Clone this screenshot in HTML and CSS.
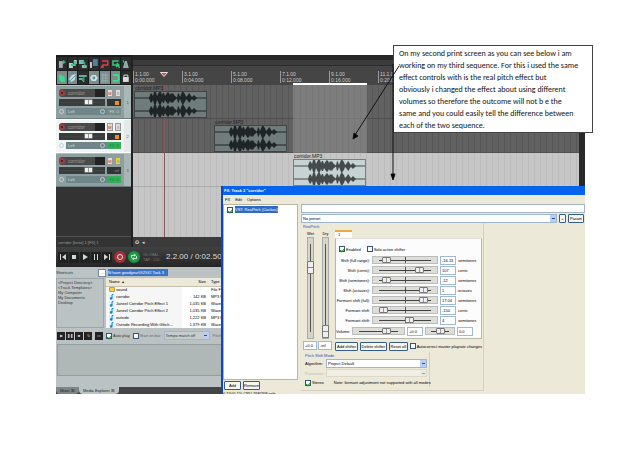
FILE: index.html
```html
<!DOCTYPE html>
<html lang="en">
<head>
<meta charset="utf-8">
<title>Second print screen</title>
<link rel="stylesheet" href="styles.css">
</head>
<body>
<svg class="defs" aria-hidden="true">
  <defs>
    <path id="half" d="M0 0V-.5H15L16-3 17-5 18-4 19-2 20-6 21-7 22-6 23-2 25-6 26-7 27-6 28-3 29-5 30-5 31-2 33-5 34-6 35-5 36-3 37-5 38-4 39-5 40-3 41-2 43-.5 44-5 45-4 46-1 48-6 49-7 50-5 51-4 52-1 54-3 55-5 56-4 57-2 58-1 60-3 61-2 62-1 63-.5H73V0Z"/>
    <symbol id="wave" viewBox="0 0 73 27">
      <use href="#half" y="7"/><use href="#half" transform="translate(0 7) scale(1 -1)"/>
      <use href="#half" y="20"/><use href="#half" transform="translate(0 20) scale(1 -1)"/>
    </symbol>
    <symbol id="note" viewBox="0 0 6 6"><path d="M0 0H6V6H0Z" fill="#e3f1fa"/><path d="M4.6 0 3 .8V4" stroke="#1686c8" fill="none"/><circle cx="2.2" cy="4.4" r="1.3" fill="#1686c8"/></symbol>
  </defs>
</svg>
<main class="page">
  <section class="daw">
    <div class="upper">
      <aside class="panel">
        <div class="tools">
          <button aria-label="New"><svg viewBox="0 0 10 12"><path d="M2 3H6V10H2Z" fill="#aab"/><path d="M5 4H9M7 2V6" stroke="#4c9" /></svg></button>
          <button aria-label="Open"><svg viewBox="0 0 10 12"><path d="M1 5H5V10H1ZM6 2H9V6H6Z" fill="#bcc"/><path d="M3 7H7V3" stroke="#3c8" stroke-width="2" fill="none"/></svg></button>
          <button aria-label="Save"><svg viewBox="0 0 10 12"><path d="M1 2H6V6H1ZM4 7H9V10H4Z" fill="#8bb"/><path d="M3 4H7V9" stroke="#3b8" fill="none"/></svg></button>
          <button aria-label="Settings"><svg viewBox="0 0 10 12"><path d="M4 1H9V8H4Z" fill="#56809a"/><path d="M1 4H3V10H1Z" fill="#ccc"/></svg></button>
          <button aria-label="Undo"><svg viewBox="0 0 10 12"><path d="M2 3H8V7H3L1 10M3 7V10" stroke="#e23a4a" stroke-width="1.5" fill="none"/></svg></button>
          <button aria-label="Redo"><svg viewBox="0 0 10 12"><path d="M8 3H2V7H7L9 10M6 5 8 7 5 9" stroke="#36c777" stroke-width="1.5" fill="none"/></svg></button>
          <button aria-label="Metronome"><svg viewBox="0 0 10 12"><path d="M4 3H6L8 10H2Z" fill="#9aa"/><path d="M5 8 2 2" stroke="#3c8"/></svg></button>
          <button class="on" aria-label="Crossfade"><svg viewBox="0 0 10 12"><path d="M2 2 8 5V10H4L2 7Z" fill="#35e08a"/></svg></button>
          <button class="on" aria-label="Group"><svg viewBox="0 0 10 12"><path d="M1 7 4 3 8 2 7 8 3 10Z" fill="#c0dde3"/><path d="M2 9 8 3" stroke="#589aa8"/></svg></button>
          <button aria-label="Ripple"><svg viewBox="0 0 10 12"><path d="M1 4H9M1 7H5" stroke="#6a9" stroke-width="2"/><path d="M6 5V10L4 8" stroke="#4c8" fill="none"/></svg></button>
          <button class="on" aria-label="Envelope"><svg viewBox="0 0 10 12"><path d="M1 6 3 3H7L9 6 7 9H3Z" fill="#cfe2e5"/><circle cx="5" cy="6" r="1.5" fill="#599"/></svg></button>
          <button class="on" aria-label="Grid"><svg viewBox="0 0 10 12"><path d="M1 3H9M1 6H9M1 9H9M3 1V11M6 1V11" stroke="#a5b5b6" stroke-width=".7"/></svg></button>
          <button class="on" aria-label="Snap"><svg viewBox="0 0 10 12"><path d="M2 3H6Q8 3 8 6T6 9H2" stroke="#32e184" stroke-width="2" fill="none"/></svg></button>
          <button aria-label="Lock"><svg viewBox="0 0 10 12"><path d="M2 5H8V10H2Z" fill="#ddd"/><path d="M3 5V3H7V5" stroke="#ddd" fill="none"/></svg></button>
        </div>
        <div class="track">
          <div class="strip">
            <div class="name"><i class="arm"></i>corridor</div><div class="pair"><button class="mute">M</button><button>S</button></div>
            <div class="fader"><input type="range" value="69" aria-label="Track 1 volume"></div><div class="pan"><i></i></div>
            <div class="input"><i></i><span>Left</span><b></b></div><button class="fx">FX ⏻</button>
          </div><span class="num">1</span>
        </div>
        <div class="track picked">
          <div class="strip">
            <div class="name"><i class="arm"></i>corridor</div><div class="pair"><button class="mute">M</button><button>S</button></div>
            <div class="fader"><input type="range" value="69" aria-label="Track 2 volume"></div><div class="pan"><i></i></div>
            <div class="input"><i></i><span>Left</span><b></b></div><button class="fx lit">FX ⏻</button>
          </div><span class="num">2</span>
        </div>
        <div class="track">
          <div class="strip">
            <div class="name"><i class="arm"></i>corridor</div><div class="pair"><button class="mute">M</button><button class="solo">S</button></div>
            <div class="fader"><input type="range" value="69" aria-label="Track 3 volume"></div><div class="pan">-inf</div>
            <div class="input"><i></i><span>Left</span><b></b></div><button class="fx lit">FX ⏻</button>
          </div><span class="num">3</span>
        </div>
        <div class="status">corridor [keito] 1 [FX] 1</div>
      </aside>
      <div class="arrange">
        <div class="topbar"></div>
        <div class="ruler">
          <span>1.1.00<br>0:00.000</span><span>3.1.00<br>0:04.000</span><span>5.1.00<br>0:08.000</span><span>7.1.00<br>0:12.000</span><span>9.1.00<br>0:16.000</span><span>11.1.00<br>0:20.000</span>
        </div>
        <div class="lanes">
          <div class="lane"><div class="clip"><span>corridor.MP3</span><svg><use href="#wave"/></svg></div></div>
          <div class="lane"><div class="clip second"><span>corridor.MP3</span><svg><use href="#wave"/></svg></div></div>
          <div class="lane light"><div class="clip third"><span>corridor.MP3</span><svg><use href="#wave"/></svg></div></div>
          <div class="lane light rest"></div>
          <div class="selection"></div>
          <div class="playhead"><svg viewBox="0 0 8 5"><path d="M.5.5H7.5L4 4.5Z" fill="#b55" stroke="#edd"/></svg></div>
        </div>
        <div class="scroll">✪ &nbsp;◂</div>
      </div>
    </div>
    <div class="transport">
      <button aria-label="Start"><svg viewBox="0 0 8 8"><path d="M1 1H2V7H1ZM7 1V7L3 4Z"/></svg></button>
      <button aria-label="Stop"><svg viewBox="0 0 8 8"><path d="M2 2H6V6H2Z"/></svg></button>
      <button aria-label="Play"><svg viewBox="0 0 8 8"><path d="M2 1 7 4 2 7Z"/></svg></button>
      <button aria-label="Pause"><svg viewBox="0 0 8 8"><path d="M2 1H3V7H2ZM5 1H6V7H5Z"/></svg></button>
      <button aria-label="End"><svg viewBox="0 0 8 8"><path d="M6 1H7V7H6ZM1 1V7L5 4Z"/></svg></button>
      <button class="round rec" aria-label="Record"><svg viewBox="0 0 12 12"><circle cx="6" cy="6" r="3" fill="none" stroke="#fff"/></svg></button>
      <button class="round loop" aria-label="Repeat"><svg viewBox="0 0 12 12"><path d="M3 7V4H7M9 5V8H5M6 2 8 4 6 5M6 7 4 8 6 10" fill="none" stroke="#fff"/></svg></button>
      <span class="auto">GLOBAL<br>TAP: 120</span>
      <span class="time">2.2.00 / 0:02.50</span>
    </div>
    <section class="explorer">
      <div class="pathbar"><label for="path">Shortcuts</label><button>...</button><input id="path" value="N:\sam goodyear\G2\G2 Task 3"></div>
      <div class="browser">
        <ul class="shortcuts"><li>&lt;Project Directory&gt;</li><li>&lt;Track Templates&gt;</li><li>My Computer</li><li>My Documents</li><li>Desktop</li></ul>
        <table class="files">
          <thead><tr><th class="fname">Name &nbsp;▴</th><th class="size">Size</th><th>Type</th></tr></thead>
          <tbody>
            <tr><td><i class="folder"></i>sound</td><td></td><td>File F</td></tr>
            <tr><td><svg><use href="#note"/></svg>corridor</td><td>142 KB</td><td>MP3 F</td></tr>
            <tr><td><svg><use href="#note"/></svg>Janeel Corridor Pitch Effect 1</td><td>1,035 KB</td><td>Wave</td></tr>
            <tr><td><svg><use href="#note"/></svg>Janeel Corridor Pitch Effect 2</td><td>1,035 KB</td><td>Wave</td></tr>
            <tr><td><svg><use href="#note"/></svg>outside</td><td>1,222 KB</td><td>MP3 F</td></tr>
            <tr><td><svg><use href="#note"/></svg>Outside Recording With Glitch...</td><td>1,379 KB</td><td>Wave</td></tr>
          </tbody>
        </table>
      </div>
      <div class="preview">
        <div class="keys"><button>▶</button><button>❚❚</button><button>■</button><button>↻</button></div>
        <button class="opt">▭</button>
        <label><input type="checkbox" checked>Auto play</label>
        <label class="faint"><input type="checkbox">Start on bar</label>
        <span class="drop tempo"><select aria-label="Tempo match"><option>Tempo match off</option></select></span>
        <span class="faint">Pitch:</span>
      </div>
      <div class="scope"></div>
    </section>
    <nav class="tabs"><a href="#mixer" class="mixer">Mixer ☒</a><a href="#media">Media Explorer ☒</a></nav>

    <section class="fxwin">
      <h1>FX: Track 3 "corridor"</h1>
      <div class="menu"><a href="#fx">FX</a><a href="#edit">Edit</a><a href="#options">Options</a></div>
      <div class="fxbody">
        <div class="chain">
          <div class="list"><label><input type="checkbox" checked><span>VST: ReaPitch (Cockos)</span></label></div>
          <div class="actions"><button>Add</button><button>Remove</button></div>
          <p>0.1%/0.1% CPU 768/768 spls</p>
        </div>
        <div class="plugin">
          <div class="comment"></div>
          <div class="preset"><span class="drop"><select aria-label="Preset"><option>No preset</option></select></span><button>+</button><button>Param</button></div>
          <div class="pitch">
            <h2>ReaPitch</h2>
            <div class="controls">
              <div class="mix">
                <label>Wet<input type="range" class="vert" value="74"></label>
                <label>Dry<input type="range" class="vert" value="0"></label>
                <input class="val" value="+0.0" aria-label="Wet level"><input class="val" value="-inf" aria-label="Dry level">
              </div>
              <div class="shifter">
                <div class="tab">1</div>
                <div class="card">
                  <div class="checks"><label><input type="checkbox" checked>Enabled</label><label><input type="checkbox">Solo active shifter</label></div>
                  <div class="row"><label for="s1">Shift (full range):</label><span class="slot"><input id="s1" type="range" value="6"></span><input class="val" value="-16.13" aria-label="Value"><span>semitones</span></div>
                  <div class="row"><label for="s2">Shift (cents):</label><span class="slot"><input id="s2" type="range" value="83"></span><input class="val" value="107" aria-label="Value"><span>cents</span></div>
                  <div class="row"><label for="s3">Shift (semitones):</label><span class="slot"><input id="s3" type="range" value="6"></span><input class="val" value="-12" aria-label="Value"><span>semitones</span></div>
                  <div class="row"><label for="s4">Shift (octaves):</label><span class="slot"><input id="s4" type="range" value="93"></span><input class="val" value="1" aria-label="Value"><span>octaves</span></div>
                  <div class="row"><label for="s5">Formant shift (full):</label><span class="slot"><input id="s5" type="range" value="93"></span><input class="val" value="17.04" aria-label="Value"><span>semitones</span></div>
                  <div class="row"><label for="s6">Formant shift:</label><span class="slot"><input id="s6" type="range" value="1"></span><input class="val" value="-150" aria-label="Value"><span>cents</span></div>
                  <div class="row"><label for="s7">Formant shift:</label><span class="slot"><input id="s7" type="range" value="60"></span><input class="val" value="4" aria-label="Value"><span>semitones</span></div>
                  <div class="volume"><label for="vol">Volume:</label><span class="slot plain"><input id="vol" type="range" value="78"></span><input class="val" value="+0.0" aria-label="Volume value"><span class="slot plain short"><input type="range" value="50" aria-label="Pan"></span><input class="val" value="0.0" aria-label="Pan value"></div>
                </div>
                <div class="buttons"><button>Add shifter</button><button>Delete shifter</button><button>Reset all</button><label><input type="checkbox">Autocorrect master playrate changes</label></div>
              </div>
            </div>
            <div class="mode">
              <h2>Pitch Shift Mode</h2>
              <div class="field"><label for="alg">Algorithm:</label><span class="drop"><select id="alg"><option>Project Default</option></select></span></div>
              <div class="field off"><label for="par">Parameter:</label><span class="drop"><select id="par" disabled><option></option></select></span></div>
              <div class="foot"><label><input type="checkbox" checked>Stereo</label><span>Note: formant adjustment not supported with all modes</span></div>
            </div>
          </div>
        </div>
      </div>
    </section>
  </section>
  <aside class="callout">
    <p>On my second print screen as you can see below i am<br>working on my third sequence. For this i used the same<br>effect controls with is the real pitch effect but<br>obviously i changed the effect about using different<br>volumes so therefore the outcome will not b e the<br>same and you could easily tell the difference between<br>each of the two sequence.</p>
    <svg class="arrows" viewBox="0 0 50 140"><path d="M48 22 4 91M42 20V132" stroke="#111" fill="none"/><path d="M2 95 3 89 7 92ZM40 130H44L42 136Z" stroke="#111"/></svg>
  </aside>
</main>
</body>
</html>
```

FILE: styles.css
```css
* { box-sizing: border-box; }
body { margin: 0; background: #fff; color: #000; font: 4px/7px "Liberation Sans", sans-serif; }
button, input, select { font: inherit; color: inherit; margin: 0; padding: 0; border: 0; min-width: 0; border-radius: 0; appearance: none; background: none; }
h1, h2, p, ul { margin: 0; padding: 0; font: inherit; list-style: none; }
a { color: inherit; text-decoration: none; }
.defs { position: absolute; width: 0; height: 0; }
.page { position: relative; padding: 55px 53px 57px 56px; }
.daw { position: relative; background: #333; overflow: hidden; }

input[type="checkbox"] { width: 6px; height: 6px; border: 1px solid #31557c; background: #fff; flex: none; display: grid; place-items: center; }
input[type="checkbox"]:checked::after { content: ""; width: 2px; height: 4px; border: solid #1b861b; border-width: 0 1px 1px 0; transform: rotate(40deg); }
input[type="range"] { display: block; width: 100%; height: 6px; background: linear-gradient(#444, #444) center / 100% 1px no-repeat; }
input[type="range"]::-webkit-slider-thumb { appearance: none; width: 9px; height: 6px; border: 1px solid #777; border-radius: 1px; background: linear-gradient(90deg, #eee 3px, #999 3px 4px, #eee 4px); }
.drop { position: relative; display: flex; flex: 1; background: #fff; border: 1px solid #9fb6cf; height: 9px; }
.drop select { width: 100%; padding-left: 1px; }
.drop::after { content: ""; position: absolute; right: 0; top: 0; bottom: 0; width: 6px; background: linear-gradient(#30508c, #30508c) center / 3px 1px no-repeat #b9cdf8; }

/* Tracks */
.upper { display: grid; grid-template-columns: 77px 1fr; }
.panel { display: flex; flex-direction: column; background: #333; border-right: 2px solid #222; }
.tools { display: grid; grid-template-columns: repeat(7, 1fr); grid-auto-rows: 13px; gap: 1px; padding: 2px 0 1px 1px; background: #1c1c1c; }
.tools button { background: #2b2d2d; }
.tools .on { background: #7c8c8d; }
.tools svg { display: block; width: 100%; height: 12px; }
.track { display: flex; height: 34px; background: #8d9fa0; border-top: 1px solid #b5c1c1; border-bottom: 1px solid #6d7c7d; }
.picked { background: #f1f5f5; border-color: #fff; }
.strip { flex: 1; display: grid; grid-template-columns: 46px 14px; grid-template-rows: 8px 7px 7px; gap: 2px; padding: 3px; color: #8b8b8b; }
.name { display: flex; align-items: center; gap: 3px; background: linear-gradient(90deg, #494b4b 36px, #222 36px); border-radius: 3px 0 0 3px; color: #999; font-size: 5px; }
.arm { width: 6px; height: 6px; border-radius: 50%; border: 2px solid #9c4046; background: #321; }
.pair { display: grid; grid-template-columns: 1fr 1fr; gap: 2px; }
.pair button { background: #ddd; border: 1px solid #999; line-height: 5px; }
.pair .mute { color: #b22; }
.pair .solo { background: #dfd63a; }
.fader { padding: 0 2px; background: #3a3d3d; }
.pan { display: flex; align-items: center; justify-content: flex-end; background: #333; padding-right: 2px; }
.pan i { width: 4px; height: 4px; background: #e99420; }
.input { display: flex; align-items: center; color: #ddd; gap: 2px; }
.input i { width: 5px; height: 5px; border: 1px solid #ccd; border-radius: 50%; }
.input span { flex: 1; background: #6f8587; padding-left: 2px; height: 7px; }
.input b { width: 5px; height: 5px; border: 1px solid #bcc; border-radius: 50%; margin-left: -9px; }
.fx { background: #748a8b; color: #cdd; line-height: 6px; overflow: hidden; }
.lit { background: #38ad59; color: #083; }
.num { width: 8px; background: #a9b6b6; text-align: center; padding-top: 13px; color: #556; }
.picked .num { background: #e5e9e9; }
.status { margin-top: auto; height: 11px; padding: 2px; border-top: 1px solid #555; color: #999; }

/* Timeline */
.arrange { min-width: 0; background: #363636; }
.topbar { height: 16px; background: linear-gradient(#272727 5px, #3c3c3c 5px 10px, #2b2b2b 10px 11px, #454545 11px); }
.ruler { height: 14px; display: grid; grid-template-columns: repeat(9, 49px); overflow: hidden; background: #454545; color: #ccc; font-size: 5px; line-height: 6px; }
.ruler span { border-left: 1px solid #999; padding-left: 1px; white-space: nowrap; height: 12px; }
.lanes { position: relative; border-right: 6px solid #292929; }
.lane { height: 34px; border-bottom: 1px solid #505050; background: repeating-linear-gradient(90deg, #616161 0 5px, #575757 5px 6px); }
.light { background: repeating-linear-gradient(90deg, #c5c6c5 0 5px, #bbbcbb 5px 6px); border-color: #aaa; }
.rest { height: 50px; border: 0; }
.clip { position: relative; z-index: 1; width: 73px; margin-left: 1px; padding-top: 1px; font-size: 5px; line-height: 5px; color: #222; }
.clip span { display: block; padding-left: 1px; }
.clip svg { display: block; width: 73px; height: 27px; background: #707b7b; outline: 1px solid #3f4545; outline-offset: -1px; fill: #1f2425; }
.second { margin-left: 81px; }
.third { margin-left: 160px; }
.third svg { background: #c6d3d2; outline-color: #758080; fill: #454a4a; }
.selection { position: absolute; left: 160px; width: 74px; top: -2px; height: 70px; border-top: 2px solid #fff; background: rgb(160 160 160 / 45%); }
.playhead { position: absolute; left: 31px; top: 0; bottom: 0; width: 1px; background: #8b5560; }
.playhead svg { position: absolute; width: 8px; height: 5px; left: -4px; top: -13px; }
.scroll { height: 10px; background: #3b3b3b; color: #ddd; line-height: 10px; padding-left: 2px; font-size: 5px; }

/* Transport */
.transport { display: flex; align-items: center; height: 20px; padding: 0 2px; gap: 1px; background: linear-gradient(#414141, #252525); color: #aaa; white-space: nowrap; }
.transport button { width: 10px; height: 11px; background: #202222; }
.transport svg { display: block; width: 8px; height: 8px; margin: auto; fill: #d5d5d5; }
.transport .round { width: 12px; height: 12px; border-radius: 50%; margin-left: 1px; }
.round svg { width: 10px; height: 10px; }
.transport .rec { background: #a03137; }
.transport .loop { background: #19953e; }
.auto { line-height: 5px; color: #777; margin: 0 2px; width: 20px; }
.time { font-size: 8px; line-height: 12px; color: #ddd; }

/* Media explorer */
.explorer { background: #bac2c3; height: 120px; color: #333; }
.pathbar { display: grid; grid-template-columns: 40px 8px 1fr; gap: 2px; height: 11px; align-items: center; }
.pathbar button { background: #fff; border: 1px solid #789; line-height: 6px; height: 8px; }
.pathbar input { width: 60px; height: 7px; color: #fff; background: #3973c8; }
.browser { display: grid; grid-template-columns: 48px 1fr; gap: 2px; }
.shortcuts { border: 1px solid #9da6a7; padding: 1px; line-height: 5px; }
.files { width: 170px; border-collapse: collapse; table-layout: fixed; background: #fff; color: #000; white-space: nowrap; }
.files th { height: 8px; padding: 0 3px; text-align: left; font-weight: normal; background: #ece9d8; border-bottom: 1px solid #c5c1ae; }
.files td { height: 7px; padding: 0 3px; line-height: 6px; }
.files .fname { width: 76px; }
.files .size { width: 26px; }
.files th:nth-child(2), .files td:nth-child(2) { text-align: right; padding-right: 2px; }
.files td:first-child { background: #f6f6f6; }
.files svg { width: 6px; height: 6px; vertical-align: top; margin-right: 1px; }
.folder { display: inline-block; width: 6px; height: 5px; background: #f3cf55; border: 1px solid #c99c28; border-radius: 1px; margin-right: 1px; vertical-align: top; }
.preview { display: flex; align-items: center; gap: 3px; height: 15px; padding-left: 1px; white-space: nowrap; }
.preview label { display: flex; align-items: center; gap: 1px; }
.keys { display: flex; gap: 1px; }
.keys button, .opt { width: 8px; height: 8px; background: #222; color: #ccc; line-height: 8px; overflow: hidden; }
.faint { color: #666; }
.preview .tempo { flex: none; width: 46px; background: #c5cccd; }
.scope { height: 32px; margin: 1px 0 0 1px; border: 1px solid #949e9f; background: #afb7b7; }
.tabs { display: flex; height: 7px; background: #444; line-height: 7px; color: #222; }
.tabs a { background: #bac2c3; padding: 0 4px; border-radius: 0 0 4px 4px; }
.tabs .mixer { background: #7d8687; }

/* Effect window */
.fxwin { position: absolute; left: 165px; right: 0; top: 131px; bottom: 0; display: flex; flex-direction: column; overflow: hidden; background: #ece9d8; border-left: 2px solid #0f43c8; white-space: nowrap; }
.fxwin h1 { background: #0762ed; color: #fff; height: 9px; line-height: 9px; font-weight: bold; padding-left: 1px; }
.menu { display: flex; gap: 5px; padding: 0 2px; height: 9px; line-height: 9px; }
.fxbody { flex: 1; min-height: 0; display: grid; grid-template-columns: 75px 1fr; gap: 3px; }
.fxbody button { background: #f6f5ee; border: 1px solid #345d86; border-radius: 1px; height: 9px; line-height: 7px; padding: 0 1px; }
.chain { display: flex; flex-direction: column; }
.list { background: #fff; border: 1px solid #b5b8a5; height: 176px; padding: 1px 3px; }
.list label { display: flex; align-items: center; gap: 2px; }
.list span { background: #316ac5; color: #fff; }
.actions { display: flex; gap: 2px; padding: 1px 1px 0; }
.fxbody .actions button { width: 17px; padding: 0; }
.plugin { min-width: 0; }
.comment { height: 9px; background: #fff; border: 1px solid #a5b5c0; }
.preset { display: flex; gap: 2px; margin: 1px 1px 0 0; }
.preset button:nth-of-type(1) { width: 7px; padding: 0; }
.preset button:nth-of-type(2) { width: 16px; padding: 0; }
.pitch { width: 183px; height: 168px; padding: 0 2px; border-right: 1px solid #d3d0bf; border-bottom: 1px solid #d3d0bf; }
.pitch h2 { color: #1b50c4; height: 7px; }
.controls { display: grid; grid-template-columns: 30px 147px; gap: 2px; }
.mix { display: grid; grid-template-columns: 15px 15px; text-align: center; row-gap: 2px; align-content: start; }
.mix label { display: flex; flex-direction: column; align-items: center; }
input.vert { writing-mode: vertical-lr; direction: rtl; width: 7px; height: 102px; border: 1px solid #aaa; background: linear-gradient(#555, #555) center / 1px 88% no-repeat #d7d5ca; }
input.vert::-webkit-slider-thumb { width: 7px; height: 13px; background: linear-gradient(#eee 5px, #888 5px 6px, #eee 6px); }
.val { width: 16px; height: 9px; padding: 0 1px; background: #fff; border: 1px solid #9fb9d1; line-height: 7px; }
.mix .val { width: 14px; }
.shifter { min-width: 0; }
.tab { width: 17px; height: 8px; background: #fcfcfc; border-top: 2px solid #f0a93f; padding-left: 3px; line-height: 6px; }
.card { height: 101px; background: #fcfcfc; border: 1px solid #b5b8ad; border-top-color: #ddd; padding: 5px 0 0; }
.checks { display: flex; gap: 6px; padding: 1px 0 0 3px; height: 11px; }
.checks label, .buttons label, .foot label { display: flex; align-items: center; gap: 1px; height: 8px; }
.row { display: grid; grid-template-columns: 34px 66px 16px 1fr; gap: 2px; height: 10px; align-items: center; }
.row label { text-align: right; }
.slot { height: 8px; padding: 0 6px; background: linear-gradient(#555, #555) center / 1px 100% no-repeat #deded9; border: 1px solid #bbb; }
.slot.plain { width: 53px; background: #deded9; }
.slot.plain.short { width: 30px; padding: 0 5px; }
.volume { display: flex; gap: 2px; align-items: center; height: 12px; }
.volume label { width: 14px; }
.buttons { display: flex; gap: 2px; padding-top: 3px; height: 13px; }
.mode { width: 127px; border-right: 1px solid #d3d0bf; padding: 0 2px; }
.field { display: flex; gap: 1px; padding-bottom: 1px; }
.field label { width: 20px; line-height: 9px; }
.off { color: #c3c0b0; }
.off .drop { background: #f1efe5; border-color: #dbd8c8; height: 8px; }
.off .drop::after { background-color: #e5e6e5; opacity: .5; }
.foot { display: flex; gap: 10px; line-height: 8px; }

/* Annotation */
.callout { position: absolute; left: 393px; top: 45px; width: 200px; background: #fff; border: 1px solid #444; padding: 1px 5px; color: #111; font: 8px/12px Carlito, Lato, sans-serif; white-space: nowrap; }
.arrows { position: absolute; left: -43px; top: -2px; width: 50px; height: 140px; }
```
